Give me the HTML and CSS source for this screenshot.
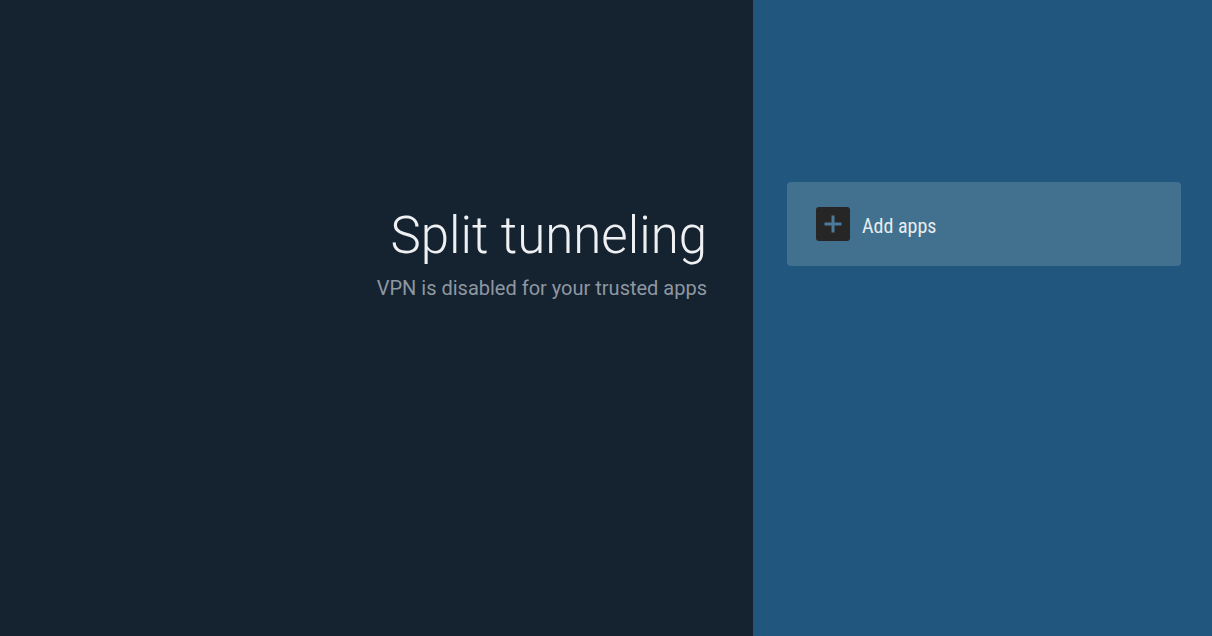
FILE: index.html
```html
<!DOCTYPE html>
<html lang="en">
<head>
    <meta charset="UTF-8">
    <title>Split tunneling</title>
    <link rel="stylesheet" href="styles.css">
</head>
<body>
    <div class="screen">
        <div class="info">
            <h1>Split tunneling</h1>
            <p>VPN is disabled for your trusted apps</p>
        </div>
        <div class="side">
            <div class="item">
                <span class="icon">
                    <svg width="20" height="20" viewBox="0 0 20 20">
                        <path d="M10 1.5v17M1.5 10h17" stroke="#4b7a9a" stroke-width="3" fill="none"/>
                    </svg>
                </span>
                <span class="label">Add apps</span>
            </div>
        </div>
    </div>
</body>
</html>
```

FILE: styles.css
```css
body {
    margin: 0;
    font-family: Roboto, "Noto Sans", sans-serif;
}
.screen {
    display: flex;
    width: 1212px;
    height: 636px;
}
.info {
    width: 707px;
    padding-right: 46px;
    padding-top: 203px;
    background-color: #152230;
    text-align: right;
}
.info h1 {
    margin: 0;
    font-size: 51px;
    font-weight: 300;
    color: #eef0f2;
    line-height: 66px;
}
.info p {
    margin: 5px 0 0;
    font-size: 20px;
    color: #8d98a2;
    line-height: 28px;
}
.side {
    flex: 1;
    background-color: #21577f;
    padding: 182px 31px 0 34px;
}
.item {
    display: flex;
    align-items: center;
    height: 84px;
    padding-left: 29px;
    background-color: #41718f;
    border-radius: 4px;
}
.icon {
    display: flex;
    align-items: center;
    justify-content: center;
    width: 34px;
    height: 34px;
    border-radius: 3px;
    background-color: #262626;
    margin-right: 12px;
}
.label {
    font-family: "Roboto Condensed", Roboto, sans-serif;
    font-size: 20px;
    color: #e8ecef;
    padding-top: 3px;
}
```
